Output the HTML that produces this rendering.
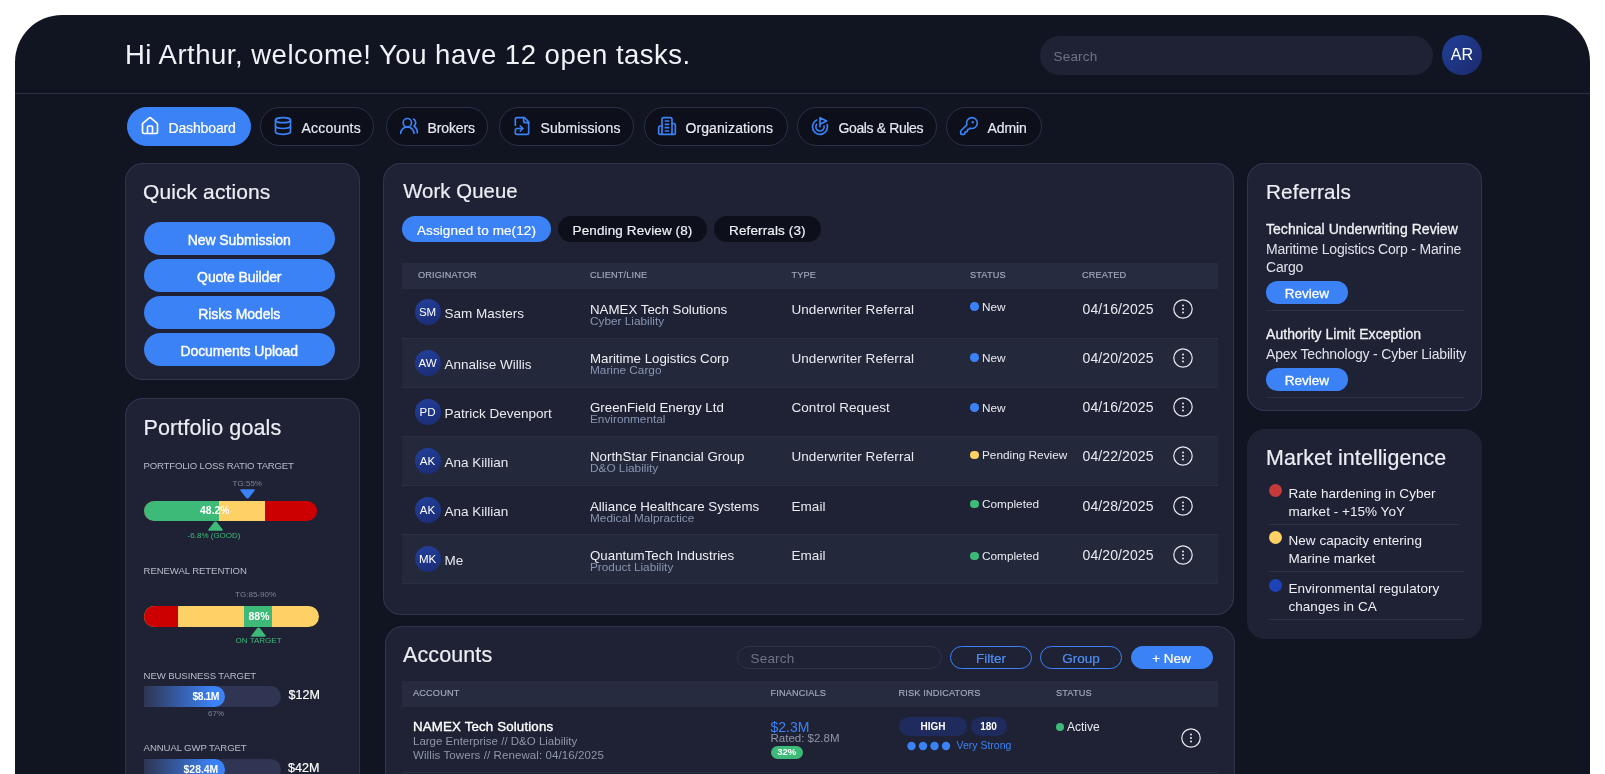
<!DOCTYPE html>
<html lang="en">
<head>
<meta charset="utf-8">
<title>Underwriter Dashboard</title>
<style>
*{box-sizing:border-box;margin:0;padding:0}
html,body{width:1605px;height:774px;overflow:hidden;background:#fff}
body{font-family:"Liberation Sans",sans-serif;color:#e8eaf0;position:relative;-webkit-font-smoothing:antialiased}
#app{position:absolute;left:0;top:0;width:1605px;height:774px;overflow:hidden;will-change:transform}
.abs{position:absolute;white-space:nowrap}
#frame{position:absolute;left:15px;top:15px;width:1575px;height:900px;background:#111522;border-radius:47px}
#hdrline{position:absolute;left:15px;top:93px;width:1575px;height:1px;background:#2a3147}
#title{left:125px;top:38.4px;font-size:27.5px;line-height:34px;letter-spacing:.5px;color:#f1f2f6}
#search{left:1040px;top:35.5px;width:393px;height:39.5px;border-radius:20px;background:#1f2234}
#search span{position:absolute;left:13.5px;top:13px;font-size:13.5px;line-height:16px;color:#6d7487;letter-spacing:.2px}
#avatar{left:1442px;top:35px;width:40px;height:40px;border-radius:50%;background:linear-gradient(135deg,#21409a,#1b2a6b);color:#fff;font-size:16px;line-height:40px;text-align:center;letter-spacing:.2px}
/* nav */
.pill{position:absolute;top:106.5px;height:39.5px;border-radius:20px;border:1px solid #2a3149;background:#0d0f1a;color:#e8eaf0;font-size:14px}
.pill.on{background:#3b82f6;border-color:#3b82f6;color:#fff}
.pill svg{position:absolute;left:12.1px;top:8.7px;width:20px;height:20px;stroke:#3b82f6;fill:none;stroke-width:2;stroke-linecap:round;stroke-linejoin:round}
.pill.on svg{stroke:#fff}
.pill span{position:absolute;left:40.5px;top:12px;line-height:16px;white-space:nowrap;-webkit-text-stroke:.18px currentColor}
/* cards */
.card{position:absolute;background:#1f2234;box-shadow:inset 0 0 0 1px #2e354f;border-radius:18px}
.h2{font-size:21px;line-height:26px;color:#eceef4;letter-spacing:.1px;-webkit-text-stroke:.2px currentColor}

/* quick actions */
.qa{position:absolute;left:18.5px;width:191.5px;height:33px;border-radius:17px;background:#3b82f6;color:#fff;font-size:14px;letter-spacing:-.1px;-webkit-text-stroke:.4px #fff;line-height:32px;text-align:center;padding-top:2px}
/* portfolio */
.lbl{font-size:9.6px;line-height:12px;color:#b6bccb;letter-spacing:-.1px;margin-top:-.5px}
.tiny{font-size:8px;line-height:10px;color:#7d8498}
.seg{position:absolute;top:0;height:100%}
.barv{font-size:10.4px;font-weight:700;color:#fff;line-height:12px}
.g{color:#3dba78}
.prog{position:absolute;left:19px;width:137px;height:20.5px;background:#2f3552;border-radius:0 11px 11px 0}
.prog i{position:absolute;left:0;top:0;height:100%;width:80.7px;border-radius:0 11px 11px 0;background:linear-gradient(90deg,rgba(59,130,246,0) 0%,#3b82f6 85%)}
.tgt{font-size:12.5px;line-height:16px;color:#fff;-webkit-text-stroke:.2px #fff}

/* work queue */
.tab{position:absolute;top:53px;height:26px;border-radius:13px;background:#0d0f1a;color:#eef0f5;font-size:13.5px;line-height:26px;text-align:center;padding-top:1.5px;letter-spacing:.12px;-webkit-text-stroke:.2px currentColor}
.tab.on{background:#3b82f6;color:#fff}
.thead{position:absolute;left:19px;width:816px;background:#272b40}
.th{position:absolute;font-size:9.2px;line-height:12px;color:#a3aabd;white-space:nowrap;letter-spacing:.15px;-webkit-text-stroke:.15px currentColor}
.row{position:absolute;left:19px;width:816px;height:49px}
.row::after{content:"";position:absolute;left:0;right:0;bottom:-1px;height:1px;background:#2a2f45;z-index:1}
.row.alt{background:#24283b}
.row>*{position:absolute;white-space:nowrap}
.row.d1>*{margin-top:1px}
.row.d1>.av,.row.d1>.nm{margin-top:.3px}
.av{left:12.5px;top:11.7px;width:26px;height:26px;border-radius:50%;background:linear-gradient(160deg,#22409c,#1b2b72);color:#fff;font-size:11.5px;line-height:26px;text-align:center}
.nm{left:42.5px;top:18.7px;font-size:13.5px;line-height:16px;color:#e8eaf0}
.cl{left:188px;top:12.5px;font-size:13.3px;line-height:16px;color:#eef0f5}
.ln{left:188px;top:26px;font-size:11.8px;line-height:13px;color:#8795b2}
.ty{left:389.5px;top:13px;font-size:13.5px;line-height:16px;color:#e8eaf0;letter-spacing:.05px}
.st{left:580px;font-size:11.8px;line-height:14px;color:#e8eaf0}
.dot{position:absolute;left:-12px;top:2.5px;width:8.5px;height:8.5px;border-radius:50%}
.b{background:#3b82f6}.y{background:#fdd166}.gr{background:#3dba78}
.dt{left:680.5px;top:12px;font-size:14px;line-height:16px;color:#e8eaf0;letter-spacing:.1px}
.more{position:absolute;width:20px;height:20px}
.row .more{left:771px;top:10px}

/* accounts */
.btn{position:absolute;top:20px;height:23px;width:82px;border-radius:12px;border:1px solid #3b82f6;color:#4f8ff7;font-size:13.5px;line-height:21px;text-align:center;padding-top:1px;-webkit-text-stroke:.2px currentColor}
.btn.f{background:#3b82f6;color:#fff}
.badge{position:absolute;height:19px;border-radius:10px;background:#1e2b5c;color:#fff;font-size:10px;font-weight:700;line-height:19px;text-align:center}
.sub{font-size:11.5px;line-height:14px;color:#8e96ab}

/* right */
.rt{font-size:14px;line-height:16px;color:#f1f2f6;-webkit-text-stroke:.3px currentColor;letter-spacing:.04px}
.rd{font-size:14px;line-height:18px;color:#dfe2ea;white-space:normal;width:215px;letter-spacing:-.2px}
.rv{position:absolute;left:19px;width:82px;height:23px;border-radius:12px;background:#3b82f6;color:#fff;font-size:13.5px;line-height:22.5px;text-align:center;padding-top:2px;-webkit-text-stroke:.3px #fff}
.hr{position:absolute;height:1px;background:#2b3047}
.mi{position:absolute;left:41.5px;width:185px;font-size:13.5px;line-height:18px;color:#eef0f5;white-space:normal;letter-spacing:.03px}
.md{position:absolute;left:22px;width:13px;height:13px;border-radius:50%}
</style>
</head>
<body>
<div id="app">
<div id="frame"></div>
<div id="hdrline"></div>
<div id="title" class="abs">Hi Arthur, welcome! You have 12 open tasks.</div>
<div id="search" class="abs"><span>Search</span></div>
<div id="avatar" class="abs">AR</div>

<!-- NAV -->
<div class="pill on" style="left:127px;width:124px"><svg viewBox="0 0 24 24"><path d="M15 21v-8a1 1 0 0 0-1-1h-4a1 1 0 0 0-1 1v8"/><path d="M3 10a2 2 0 0 1 .709-1.528l7-5.999a2 2 0 0 1 2.582 0l7 5.999A2 2 0 0 1 21 10v9a2 2 0 0 1-2 2H5a2 2 0 0 1-2-2z"/></svg><span style="letter-spacing:-0.14px">Dashboard</span></div>
<div class="pill" style="left:260px;width:114px"><svg viewBox="0 0 24 24"><ellipse cx="12" cy="5" rx="9" ry="3"/><path d="M3 5V19A9 3 0 0 0 21 19V5"/><path d="M3 12A9 3 0 0 0 21 12"/></svg><span style="letter-spacing:0.22px">Accounts</span></div>
<div class="pill" style="left:386px;width:102px"><svg viewBox="0 0 24 24"><path d="M18 21a8 8 0 0 0-16 0"/><circle cx="10" cy="8" r="5"/><path d="M22 20c0-3.37-2-6.5-4-8a5 5 0 0 0-.45-8.3"/></svg><span style="letter-spacing:-0.13px">Brokers</span></div>
<div class="pill" style="left:499px;width:135px"><svg viewBox="0 0 24 24"><path d="m10 18 3-3-3-3"/><path d="M14 2v4a2 2 0 0 0 2 2h4"/><path d="M4 11V4a2 2 0 0 1 2-2h9l5 5v13a2 2 0 0 1-2 2H6a2 2 0 0 1-2-2v-3a2 2 0 0 1 2-2h7"/></svg><span style="letter-spacing:0.06px">Submissions</span></div>
<div class="pill" style="left:644px;width:144px"><svg viewBox="0 0 24 24"><path d="M6 22V4a2 2 0 0 1 2-2h8a2 2 0 0 1 2 2v18Z"/><path d="M6 12H4a2 2 0 0 0-2 2v6a2 2 0 0 0 2 2h2"/><path d="M18 9h2a2 2 0 0 1 2 2v9a2 2 0 0 1-2 2h-2"/><path d="M10 6h4"/><path d="M10 10h4"/><path d="M10 14h4"/><path d="M10 18h4"/></svg><span style="letter-spacing:0.09px">Organizations</span></div>
<div class="pill" style="left:797px;width:140px"><svg viewBox="0 0 24 24"><path d="M12 13V2l8 4-8 4"/><path d="M20.561 10.222a9 9 0 1 1-12.55-5.29"/><path d="M8.002 9.997a5 5 0 1 0 8.9 2.02"/></svg><span style="letter-spacing:-0.38px">Goals &amp; Rules</span></div>
<div class="pill" style="left:946px;width:96px"><svg viewBox="0 0 24 24"><path d="M2.586 17.414A2 2 0 0 0 2 18.828V21a1 1 0 0 0 1 1h3a1 1 0 0 0 1-1v-1a1 1 0 0 1 1-1h1a1 1 0 0 0 1-1v-1a1 1 0 0 1 1-1h.172a2 2 0 0 0 1.414-.586l.814-.814a6.5 6.5 0 1 0-4-4z"/><circle cx="16.5" cy="7.5" r=".5" fill="#3b82f6"/></svg><span style="letter-spacing:-0.12px">Admin</span></div>

<!--LEFT-->
<div class="card" style="left:125px;top:163px;width:234.5px;height:217px">
  <div class="abs h2" style="left:18px;top:15.5px">Quick actions</div>
  <div class="qa" style="top:59px">New Submission</div>
  <div class="qa" style="top:96px">Quote Builder</div>
  <div class="qa" style="top:133px">Risks Models</div>
  <div class="qa" style="top:170px">Documents Upload</div>
</div>
<div class="card" style="left:125px;top:398px;width:234.5px;height:500px">
  <div class="abs h2" style="left:18.5px;top:16.5px;font-size:21.5px">Portfolio goals</div>
  <div class="abs lbl" style="left:18.6px;top:62.5px;letter-spacing:-.2px">PORTFOLIO LOSS RATIO TARGET</div>
  <div class="abs tiny" style="left:107.6px;top:80.5px">TG:55%</div>
  <svg class="abs" style="left:114.1px;top:91px" width="17" height="10" viewBox="0 0 17 10"><path d="M2 1h13l-5.6 7.2a1.2 1.2 0 0 1-1.8 0z" fill="#3b82f6" stroke="#3b82f6" stroke-width="1.6" stroke-linejoin="round"/></svg>
  <div class="abs" style="left:18.6px;top:102.5px;width:173.5px;height:20.5px;border-radius:11px;overflow:hidden;background:#cc0000">
    <div class="seg" style="left:0;width:75px;background:#3dba78"></div>
    <div class="seg" style="left:75px;width:46.5px;background:#fdd166"></div>
  </div>
  <div class="abs barv" style="left:75.1px;top:107px">48.2%</div>
  <svg class="abs" style="left:81.6px;top:123px" width="17" height="10" viewBox="0 0 17 10"><path d="M2 9h13l-5.6-7.2a1.2 1.2 0 0 0-1.8 0z" fill="#3dba78" stroke="#3dba78" stroke-width="1.6" stroke-linejoin="round"/></svg>
  <div class="abs tiny g" style="left:62.6px;top:133px">-6.8% (GOOD)</div>

  <div class="abs lbl" style="left:18.6px;top:167.5px">RENEWAL RETENTION</div>
  <div class="abs tiny" style="left:110.1px;top:191.5px">TG:85-90%</div>
  <div class="abs" style="left:18.6px;top:207.5px;width:175px;height:21px;border-radius:11px;overflow:hidden;background:#fdd166">
    <div class="seg" style="left:0;width:34.5px;background:#cc0000"></div>
    <div class="seg" style="left:100.5px;width:27.5px;background:#3dba78"></div>
  </div>
  <div class="abs barv" style="left:123.6px;top:212.5px">88%</div>
  <svg class="abs" style="left:124.6px;top:228.5px" width="17" height="10" viewBox="0 0 17 10"><path d="M2 9h13l-5.6-7.2a1.2 1.2 0 0 0-1.8 0z" fill="#3dba78" stroke="#3dba78" stroke-width="1.6" stroke-linejoin="round"/></svg>
  <div class="abs tiny g" style="left:110.6px;top:238px">ON TARGET</div>

  <div class="abs lbl" style="left:18.6px;top:272.5px">NEW BUSINESS TARGET</div>
  <div class="prog" style="top:288px"><i></i></div>
  <div class="abs barv" style="left:67.6px;top:293px;letter-spacing:-.5px">$8.1M</div>
  <div class="abs tgt" style="left:163.6px;top:289px">$12M</div>
  <div class="abs tiny" style="left:83.1px;top:310.5px">67%</div>

  <div class="abs lbl" style="left:18.6px;top:344.5px">ANNUAL GWP TARGET</div>
  <div class="prog" style="top:361px"><i></i></div>
  <div class="abs barv" style="left:58.6px;top:366px">$28.4M</div>
  <div class="abs tgt" style="left:163.1px;top:362px">$42M</div>
</div>

<!--CENTER-->
<div class="card" style="left:383px;top:163px;width:850.5px;height:451.7px">
  <div class="abs h2" style="left:20.2px;top:15px;font-size:20.3px">Work Queue</div>
  <div class="tab on" style="left:19px;width:149px">Assigned to me(12)</div>
  <div class="tab" style="left:175px;width:149px">Pending Review (8)</div>
  <div class="tab" style="left:331px;width:106.7px">Referrals (3)</div>
  <div class="thead" style="top:100px;height:26px"></div>
  <div class="th" style="left:35px;top:106px">ORIGINATOR</div>
  <div class="th" style="left:207px;top:106px">CLIENT/LINE</div>
  <div class="th" style="left:408.5px;top:106px">TYPE</div>
  <div class="th" style="left:587px;top:106px">STATUS</div>
  <div class="th" style="left:699px;top:106px">CREATED</div>
  <div class="row" style="top:126px"><div class="av" style="top:10px">SM</div><div class="nm" style="top:17px">Sam Masters</div><div class="cl">NAMEX Tech Solutions</div><div class="ln">Cyber Liability</div><div class="ty">Underwriter Referral</div><div class="st" style="top:10.5px"><i class="dot b"></i>New</div><div class="dt">04/16/2025</div><svg class="more" viewBox="0 0 20 20"><circle cx="10" cy="10" r="9.2" fill="none" stroke="#e8eaf0" stroke-width="1.2"/><circle cx="10" cy="6.4" r="1" fill="#e8eaf0"/><circle cx="10" cy="10" r="1" fill="#e8eaf0"/><circle cx="10" cy="13.6" r="1" fill="#e8eaf0"/></svg></div>
  <div class="row alt" style="top:175px"><div class="av">AW</div><div class="nm">Annalise Willis</div><div class="cl">Maritime Logistics Corp</div><div class="ln">Marine Cargo</div><div class="ty">Underwriter Referral</div><div class="st" style="top:12.7px"><i class="dot b"></i>New</div><div class="dt">04/20/2025</div><svg class="more" viewBox="0 0 20 20"><circle cx="10" cy="10" r="9.2" fill="none" stroke="#e8eaf0" stroke-width="1.2"/><circle cx="10" cy="6.4" r="1" fill="#e8eaf0"/><circle cx="10" cy="10" r="1" fill="#e8eaf0"/><circle cx="10" cy="13.6" r="1" fill="#e8eaf0"/></svg></div>
  <div class="row" style="top:224px"><div class="av">PD</div><div class="nm">Patrick Devenport</div><div class="cl">GreenField Energy Ltd</div><div class="ln">Environmental</div><div class="ty">Control Request</div><div class="st" style="top:13.7px"><i class="dot b"></i>New</div><div class="dt">04/16/2025</div><svg class="more" viewBox="0 0 20 20"><circle cx="10" cy="10" r="9.2" fill="none" stroke="#e8eaf0" stroke-width="1.2"/><circle cx="10" cy="6.4" r="1" fill="#e8eaf0"/><circle cx="10" cy="10" r="1" fill="#e8eaf0"/><circle cx="10" cy="13.6" r="1" fill="#e8eaf0"/></svg></div>
  <div class="row alt" style="top:273px"><div class="av">AK</div><div class="nm">Ana Killian</div><div class="cl">NorthStar Financial Group</div><div class="ln">D&amp;O Liability</div><div class="ty">Underwriter Referral</div><div class="st" style="top:12px"><i class="dot y"></i>Pending Review</div><div class="dt">04/22/2025</div><svg class="more" viewBox="0 0 20 20"><circle cx="10" cy="10" r="9.2" fill="none" stroke="#e8eaf0" stroke-width="1.2"/><circle cx="10" cy="6.4" r="1" fill="#e8eaf0"/><circle cx="10" cy="10" r="1" fill="#e8eaf0"/><circle cx="10" cy="13.6" r="1" fill="#e8eaf0"/></svg></div>
  <div class="row d1" style="top:322px"><div class="av">AK</div><div class="nm">Ana Killian</div><div class="cl">Alliance Healthcare Systems</div><div class="ln">Medical Malpractice</div><div class="ty">Email</div><div class="st" style="top:11px"><i class="dot gr"></i>Completed</div><div class="dt">04/28/2025</div><svg class="more" viewBox="0 0 20 20"><circle cx="10" cy="10" r="9.2" fill="none" stroke="#e8eaf0" stroke-width="1.2"/><circle cx="10" cy="6.4" r="1" fill="#e8eaf0"/><circle cx="10" cy="10" r="1" fill="#e8eaf0"/><circle cx="10" cy="13.6" r="1" fill="#e8eaf0"/></svg></div>
  <div class="row alt d1" style="top:371px"><div class="av">MK</div><div class="nm">Me</div><div class="cl">QuantumTech Industries</div><div class="ln">Product Liability</div><div class="ty">Email</div><div class="st" style="top:14.2px"><i class="dot gr"></i>Completed</div><div class="dt">04/20/2025</div><svg class="more" viewBox="0 0 20 20"><circle cx="10" cy="10" r="9.2" fill="none" stroke="#e8eaf0" stroke-width="1.2"/><circle cx="10" cy="6.4" r="1" fill="#e8eaf0"/><circle cx="10" cy="10" r="1" fill="#e8eaf0"/><circle cx="10" cy="13.6" r="1" fill="#e8eaf0"/></svg></div>
</div>
<div class="card" style="left:385px;top:626px;width:850px;height:300px">
  <div class="abs h2" style="left:18px;top:16.1px;font-size:21.5px">Accounts</div>
  <div class="abs" style="left:352px;top:20px;width:205px;height:23px;border-radius:12px;border:1px solid #2d3249;background:#1f2234"><span style="position:absolute;left:12.5px;top:3.5px;font-size:13.5px;line-height:16px;color:#6d7487;letter-spacing:.2px">Search</span></div>
  <div class="btn" style="left:565px">Filter</div>
  <div class="btn" style="left:655px">Group</div>
  <div class="btn f" style="left:745.5px">+ New</div>
  <div class="thead" style="left:17px;top:55px;height:26px"></div>
  <div class="th" style="left:28px;top:61px">ACCOUNT</div>
  <div class="th" style="left:385.5px;top:61px">FINANCIALS</div>
  <div class="th" style="left:513.5px;top:61px">RISK INDICATORS</div>
  <div class="th" style="left:671px;top:61px">STATUS</div>
  <div class="abs" style="left:28px;top:93px;font-size:13.3px;line-height:16px;color:#fff;letter-spacing:.15px;-webkit-text-stroke:.35px #fff">NAMEX Tech Solutions</div>
  <div class="abs sub" style="left:28px;top:108px">Large Enterprise // D&amp;O Liability</div>
  <div class="abs sub" style="left:28px;top:121.5px;letter-spacing:.09px">Willis Towers // Renewal: 04/16/2025</div>
  <div class="abs" style="left:385.5px;top:93px;font-size:14px;line-height:16px;color:#3b82f6">$2.3M</div>
  <div class="abs sub" style="left:385.5px;top:104.5px">Rated: $2.8M</div>
  <div class="abs" style="left:385.5px;top:120px;width:32.5px;height:12.5px;border-radius:7px;background:#3dba78;color:#fff;font-size:9.5px;font-weight:700;line-height:12.5px;text-align:center">32%</div>
  <div class="badge" style="left:514px;top:91px;width:68px">HIGH</div>
  <div class="badge" style="left:585.5px;top:91px;width:36px">180</div>
  <svg class="abs" style="left:521px;top:114.5px" width="46" height="10" viewBox="0 0 46 10"><circle cx="5.5" cy="5" r="4.2" fill="#3b82f6"/><circle cx="17" cy="5" r="4.2" fill="#3b82f6"/><circle cx="28.5" cy="5" r="4.2" fill="#3b82f6"/><circle cx="40" cy="5" r="4.2" fill="#3b82f6"/></svg>
  <div class="abs" style="left:571.5px;top:113px;font-size:10.5px;line-height:13px;color:#3b82f6">Very Strong</div>
  <div class="abs" style="left:682px;top:94px;font-size:12px;line-height:14px;color:#e8eaf0"><i class="dot gr" style="left:-11.5px;top:3px;width:8px;height:8px"></i>Active</div>
  <svg class="more" style="left:796px;top:102px" viewBox="0 0 20 20"><circle cx="10" cy="10" r="9.2" fill="none" stroke="#e8eaf0" stroke-width="1.2"/><circle cx="10" cy="6.4" r="1" fill="#e8eaf0"/><circle cx="10" cy="10" r="1" fill="#e8eaf0"/><circle cx="10" cy="13.6" r="1" fill="#e8eaf0"/></svg>
  <div class="abs" style="left:17px;top:146px;width:816px;height:1px;background:#2a2f45"></div>
</div>

<!--RIGHT-->
<div class="card" style="left:1247px;top:163px;width:234.5px;height:248px">
  <div class="abs h2" style="left:19px;top:15.7px;font-size:20.7px">Referrals</div>
  <div class="abs rt" style="left:19px;top:58.3px">Technical Underwriting Review</div>
  <div class="abs rd" style="left:19px;top:76.8px">Maritime Logistics Corp - Marine<br>Cargo</div>
  <div class="rv" style="top:118px">Review</div>
  <div class="hr" style="left:19px;top:147px;width:199px"></div>
  <div class="abs rt" style="left:19px;top:162.8px">Authority Limit Exception</div>
  <div class="abs rd" style="left:19px;top:182px;white-space:nowrap">Apex Technology - Cyber Liability</div>
  <div class="rv" style="top:205px">Review</div>
  <div class="hr" style="left:19px;top:234px;width:199px"></div>
</div>
<div class="card" style="left:1247px;top:429px;width:234.5px;height:209.5px;box-shadow:none">
  <div class="abs h2" style="left:19px;top:15.5px;font-size:21.4px">Market intelligence</div>
  <i class="md" style="top:55px;background:#c73a3a"></i>
  <div class="mi" style="top:55.7px">Rate hardening in Cyber<br>market - +15% YoY</div>
  <div class="hr" style="left:22px;top:94.5px;width:191px"></div>
  <i class="md" style="top:102px;background:#fdd166"></i>
  <div class="mi" style="top:103.2px">New capacity entering<br>Marine market</div>
  <div class="hr" style="left:22px;top:142px;width:196px"></div>
  <i class="md" style="top:150px;background:#1d43b8"></i>
  <div class="mi" style="top:150.8px">Environmental regulatory<br>changes in CA</div>
  <div class="hr" style="left:22px;top:189.5px;width:196px"></div>
</div>

</div>
</body>
</html>
